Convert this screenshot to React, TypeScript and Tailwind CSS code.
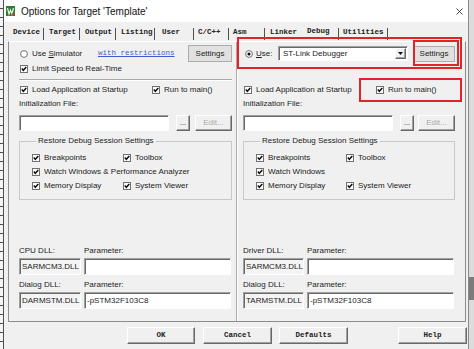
import React from 'react';

const sans = "font-['Liberation_Sans',Arial,sans-serif]";
const mono = "font-['Liberation_Mono','Courier_New',monospace]";

// classic 3D borders
const sunken =
  'border border-t-[#a0a0a0] border-l-[#a0a0a0] border-r-white border-b-white shadow-[inset_1px_1px_0_#696969]';
const raised =
  'border border-t-white border-l-white border-r-[#696969] border-b-[#696969] shadow-[inset_-1px_-1px_0_#a0a0a0] bg-[#f0f0f0]';
const winBtn = 'border border-[#adadad] bg-[#e1e1e1]';

const tabs = [
  { label: 'Device', cls: 'w-[34px] pl-[4px]', sep: true },
  { label: 'Target', cls: 'w-[35px] pl-[5px]', sep: true },
  { label: 'Output', cls: 'w-[35px] pl-[5px]', sep: true },
  { label: 'Listing', cls: 'w-[38px] pl-[5px]', sep: true },
  { label: 'User', cls: 'w-[38px] pl-[7px]', sep: true },
  { label: 'C/C++', cls: 'w-[34px] pl-[4px]', sep: true },
  { label: 'Asm', cls: 'w-[35px] pl-[4px]', sep: true },
  { label: 'Linker', cls: 'w-[38px] pl-[5px]', sep: false },
  { label: 'Debug', cls: 'w-[35px] pl-[4px] pb-[3px]', sep: true },
  { label: 'Utilities', cls: 'w-[48px] pl-[4px]', sep: true },
];

function Check({ on = true }: { on?: boolean }) {
  return (
    <svg width="8" height="8" viewBox="0 0 8 8" className="shrink-0">
      <rect x="0.5" y="0.5" width="7" height="7" fill="#fff" stroke="#707070" />
      {on && <path d="M1.8 3.6 L3.3 5.3 L6.3 1.9" fill="none" stroke="#111" strokeWidth="1.5" />}
    </svg>
  );
}

function Radio({ on = false }: { on?: boolean }) {
  return (
    <svg width="8" height="8" viewBox="0 0 8 8" className="shrink-0">
      <circle cx="4" cy="4" r="3.4" fill="#fff" stroke="#707070" />
      {on && <circle cx="4" cy="4" r="1.6" fill="#111" />}
    </svg>
  );
}

function CheckRow({ label, className = '' }: { label: string; className?: string }) {
  return (
    <div className={`flex items-center gap-[4px] ${className}`}>
      <Check />
      <span className="whitespace-nowrap">{label}</span>
    </div>
  );
}

function Group({ items, colW }: { items: [string, string?][]; colW: string }) {
  return (
    <fieldset className="w-full border border-[#c8c8c8] pb-[6px] pl-[12px] pt-[4px]">
      <legend className="ml-[4px] px-[2px] leading-[12px]">Restore Debug Session Settings</legend>
      {items.map(([a, b]) => (
        <div key={a} className="flex h-[14px] items-center">
          <CheckRow label={a} className={b ? colW : ''} />
          {b && <CheckRow label={b} />}
        </div>
      ))}
    </fieldset>
  );
}

function InitFile({ w }: { w: string }) {
  return (
    <>
      <div className="flex h-[14px] items-center">Initialization File:</div>
      <div className="mt-[4px] flex h-[16px] items-stretch">
        <div className={`${w} bg-white ${sunken}`} />
        <div className={`ml-[7px] flex w-[14px] items-end justify-center pb-[2px] text-[7px] ${raised}`}>...</div>
        <div className={`ml-auto flex w-[37px] items-center justify-center text-[#a8a8a8] ${raised}`}>Edit...</div>
      </div>
    </>
  );
}

function DllRows({ first, dll1, dll2, dllW, parW }: { first: string; dll1: string; dll2: string; dllW: string; parW: string }) {
  const rows: [string, string, string][] = [
    [first, dll1, ''],
    ['Dialog DLL:', dll2, '-pSTM32F103C8'],
  ];
  return (
    <>
      {rows.map(([lab, dll, par], i) => (
        <div key={lab} className={i ? 'mt-[3px]' : 'mt-[44px]'}>
          <div className="flex h-[14px] items-center">
            <span className={dllW}>{lab}</span>
            <span className="ml-[3px]">Parameter:</span>
          </div>
          <div className="flex h-[17px] items-stretch">
            <div className={`${dllW} flex items-center bg-[#f4f4f4] pl-[2px] ${sunken}`}>{dll}</div>
            <div className={`${parW} ml-[3px] flex items-center bg-white pl-[2px] ${sunken}`}>{par}</div>
          </div>
        </div>
      ))}
    </>
  );
}

export default function App() {
  return (
    <div className={`relative flex h-[349px] w-[474px] overflow-hidden bg-[#f0f0f0] text-[8px] text-[#1c1c1c] ${sans}`}>
      {/* window behind, left edge */}
      <div className="w-[3px] shrink-0 bg-[repeating-linear-gradient(180deg,#f4f4f4_0,#f4f4f4_8px,#4a4a4a_8px,#4a4a4a_9px)]" />

      {/* dialog */}
      <div className="flex w-[466px] shrink-0 flex-col border-l border-r border-l-[#505050] border-r-[#8a8a8a] bg-[#f0f0f0]">
        {/* title bar */}
        <div className="flex h-[22px] shrink-0 items-center bg-white">
          <svg width="9" height="10" viewBox="0 0 9 10" className="ml-[2px] mt-[-1px]">
            <rect x="0" y="0" width="9" height="10" fill="#2f7a34" />
            <path d="M1.5 2 L3 8 L4.5 4 L6 8 L7.5 2" fill="none" stroke="#e8f2e0" strokeWidth="1.2" />
            <rect x="6" y="7" width="2" height="2" fill="#d33" />
          </svg>
          <span className="ml-[6px] text-[10px] text-[#111]">Options for Target 'Template'</span>
          <svg width="7" height="7" viewBox="0 0 7 7" className="ml-auto mr-[5px] mt-[1px]">
            <path d="M0.5 0.5 L6.5 6.5 M6.5 0.5 L0.5 6.5" stroke="#333" strokeWidth="0.9" />
          </svg>
        </div>

        {/* tabs */}
        <div className={`flex h-[19px] shrink-0 items-stretch pl-[5px] text-[7.5px] font-bold text-[#222] ${mono}`}>
          {tabs.map((t) => (
            <React.Fragment key={t.label}>
              <div className={`flex items-center pt-[3px] ${t.cls}`}>{t.label}</div>
              {t.sep && <div className="mb-[1px] mt-[6px] w-px bg-[#505050]" />}
            </React.Fragment>
          ))}
        </div>

        {/* tab page */}
        <div className="ml-[4px] flex h-[281px] w-[458px] shrink-0 border border-[#8c8c8c] border-t-white">
          {/* simulator side */}
          <div className="flex w-[227px] flex-col pl-[10px] pr-[4px] pt-[3px]">
            <div className="flex h-[17px] items-center">
              <div className="flex w-[79px] items-center gap-[4px] pl-[1px]">
                <Radio />
                <span>
                  Use <span className="underline">S</span>imulator
                </span>
              </div>
              <span className={`${mono} text-[7.5px] text-[#3c5fd0] underline`}>with restrictions</span>
              <div className={`ml-auto flex h-[17px] w-[44px] items-center justify-center ${winBtn}`}>Settings</div>
            </div>
            <CheckRow label="Limit Speed to Real-Time" className="h-[14px] pl-[1px]" />
            <div className="mt-[3px] h-[2px] border-b border-t border-b-white border-t-[#a8a8a8]" />
            <div className="mt-[2px] flex h-[14px] items-center pl-[1px]">
              <CheckRow label="Load Application at Startup" className="w-[132px]" />
              <CheckRow label="Run to main()" />
            </div>
            <InitFile w="w-[150px]" />
            <div className="mt-[4px]">
              <Group
                colW="w-[91px]"
                items={[
                  ['Breakpoints', 'Toolbox'],
                  ['Watch Windows & Performance Analyzer'],
                  ['Memory Display', 'System Viewer'],
                ]}
              />
            </div>
            <DllRows first="CPU DLL:" dll1="SARMCM3.DLL" dll2="DARMSTM.DLL" dllW="w-[62px]" parW="w-[147px]" />
          </div>

          {/* divider */}
          <div className="w-[2px] border-l border-r border-l-[#a8a8a8] border-r-white" />

          {/* debugger side */}
          <div className="flex w-[226px] flex-col pl-[5px] pr-[9px] pt-[3px]">
            <div className="flex h-[17px] items-center">
              <div className="flex w-[35px] items-center gap-[3px] pl-[2px]">
                <Radio on />
                <span>
                  <span className="underline">U</span>se:
                </span>
              </div>
              <div className={`flex h-[15px] w-[130px] items-center bg-white pl-[4px] ${sunken}`}>
                <span className="flex-1">ST-Link Debugger</span>
                <div className={`mr-[1px] flex h-[11px] w-[11px] items-center justify-center ${raised}`}>
                  <svg width="5" height="3" viewBox="0 0 5 3">
                    <path d="M0 0 H5 L2.5 3 Z" fill="#111" />
                  </svg>
                </div>
              </div>
              <div className={`ml-auto flex h-[16px] w-[42px] items-center justify-center ${winBtn}`}>Settings</div>
            </div>
            <div className="mt-[21px] flex h-[14px] items-center pl-[1px]">
              <CheckRow label="Load Application at Startup" className="w-[132px]" />
              <CheckRow label="Run to main()" />
            </div>
            <InitFile w="w-[150px]" />
            <div className="mt-[4px]">
              <Group
                colW="w-[90px]"
                items={[
                  ['Breakpoints', 'Toolbox'],
                  ['Watch Windows'],
                  ['Memory Display', 'System Viewer'],
                ]}
              />
            </div>
            <DllRows first="Driver DLL:" dll1="SARMCM3.DLL" dll2="TARMSTM.DLL" dllW="w-[61px]" parW="w-[147px]" />
          </div>
        </div>

        {/* dialog buttons */}
        <div className={`flex flex-1 items-start pl-[123px] pt-[5px] text-[7.5px] font-bold text-[#222] ${mono}`}>
          <div className={`flex h-[17px] w-[68px] items-center justify-center ${raised}`}>OK</div>
          <div className={`ml-[8px] flex h-[17px] w-[69px] items-center justify-center ${raised}`}>Cancel</div>
          <div className={`ml-[7px] flex h-[17px] w-[69px] items-center justify-center ${raised}`}>Defaults</div>
          <div className={`ml-[50px] flex h-[17px] w-[69px] items-center justify-center ${raised}`}>Help</div>
        </div>
      </div>

      {/* desktop to the right */}
      <div className="flex flex-1 flex-col bg-[#dcdcdc]">
        <div className="h-[277px]" />
        <div className="h-[23px] bg-[#7c7c7c]" />
      </div>

      {/* red annotation boxes */}
      <div className="absolute left-[237px] top-[37px] h-[32px] w-[225px] border-2 border-[#e3222a]" />
      <div className="absolute left-[413px] top-[40px] h-[26px] w-[46px] border-2 border-[#e3222a]" />
      <div className="absolute left-[359px] top-[78px] h-[24px] w-[103px] border-2 border-[#e3222a]" />
    </div>
  );
}
